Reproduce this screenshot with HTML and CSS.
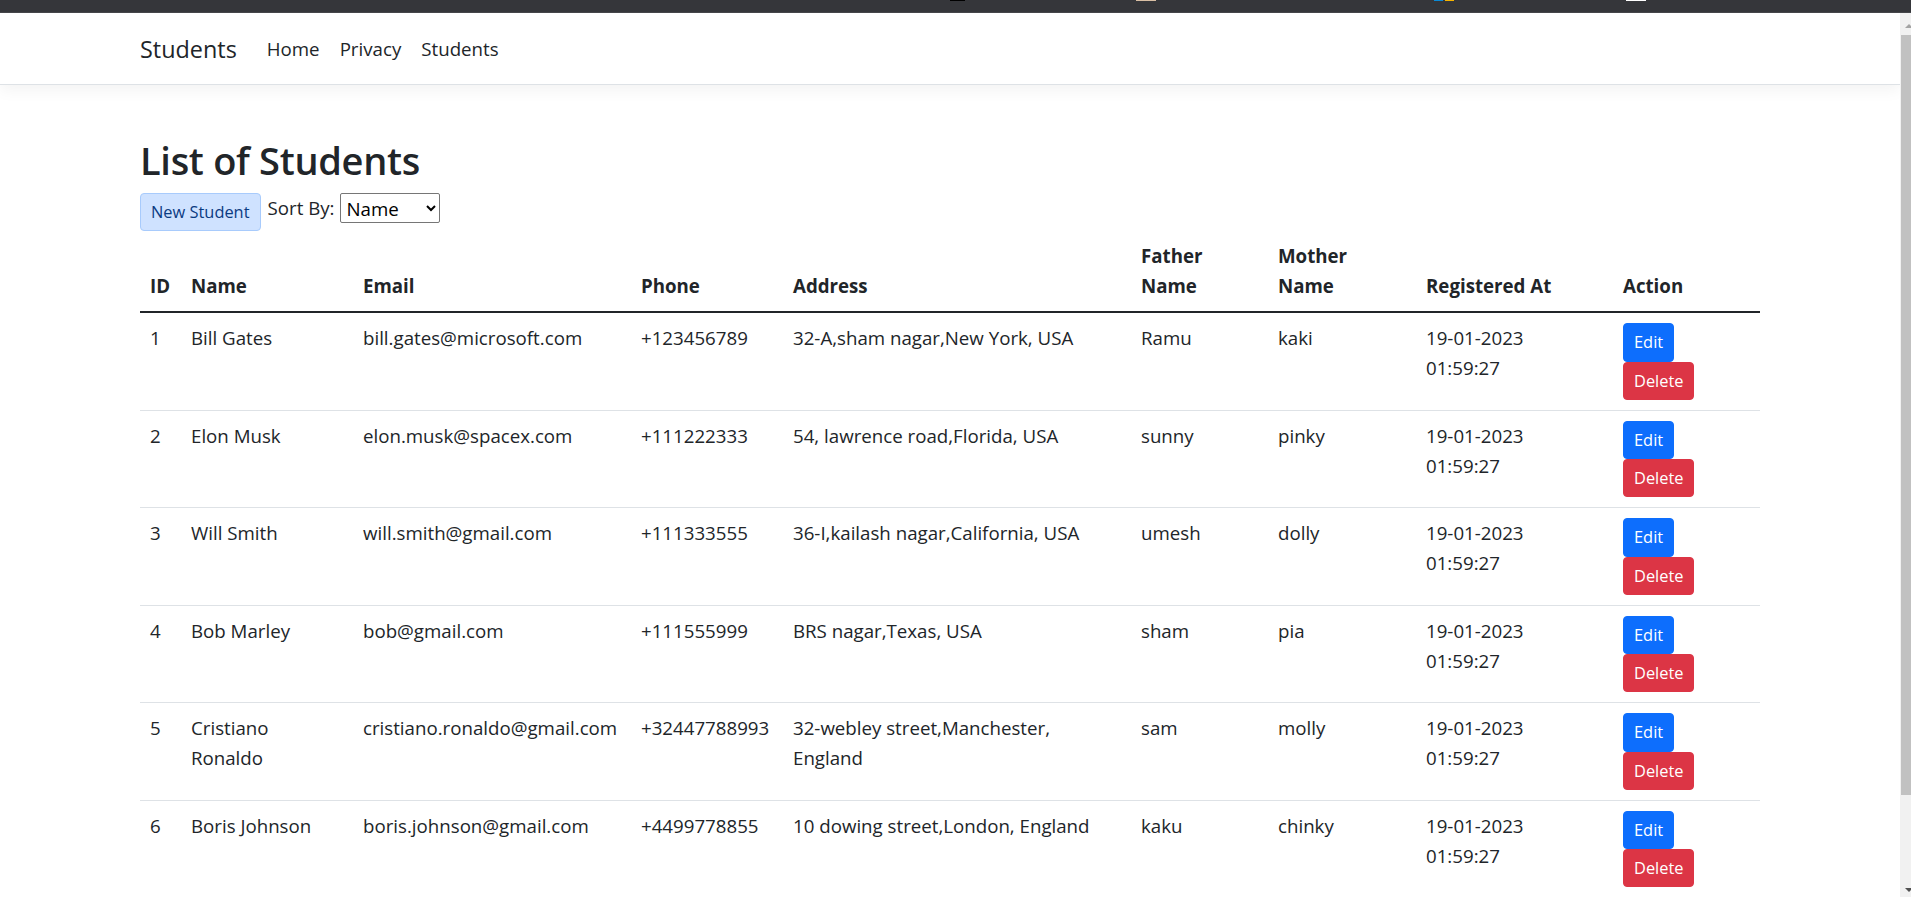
FILE: index.html
```html
<!DOCTYPE html>
<html lang="en">
<head>
<meta charset="utf-8">
<title>Students</title>
<link rel="stylesheet" href="styles.css">
</head>
<body>
<div class="browser-top">
  <span class="tick tick-black"></span>
  <span class="tick tick-beige"></span>
  <span class="tick tick-blue"></span>
  <span class="tick tick-yellow"></span>
  <span class="tick tick-white"></span>
</div>
<div class="viewport">
  <div class="page">
    <header class="navbar">
      <div class="container nav-inner">
        <a class="brand" href="#">Students</a>
        <nav class="nav">
          <a class="nav-link" href="#">Home</a>
          <a class="nav-link" href="#">Privacy</a>
          <a class="nav-link" href="#">Students</a>
        </nav>
      </div>
    </header>
    <main class="container">
      <h1 class="title">List of Students</h1>
      <div class="toolbar">
        <button class="btn btn-sm btn-new">New Student</button>
        <label class="sort-label" for="sort">Sort By:</label>
        <select id="sort" class="sort-select">
          <option>Name</option>
          <option>Email</option>
          <option>Date</option>
        </select>
      </div>
      <table class="table">
        <colgroup>
          <col class="c-id"><col class="c-name"><col class="c-email"><col class="c-phone"><col class="c-address"><col class="c-father"><col class="c-mother"><col class="c-reg"><col class="c-action">
        </colgroup>
        <thead>
          <tr>
            <th>ID</th><th>Name</th><th>Email</th><th>Phone</th><th>Address</th><th>Father Name</th><th>Mother Name</th><th>Registered At</th><th>Action</th>
          </tr>
        </thead>
        <tbody>
          <tr>
            <td>1</td><td>Bill Gates</td><td>bill.gates@microsoft.com</td><td>+123456789</td><td>32-A,sham nagar,New York, USA</td><td>Ramu</td><td>kaki</td><td><div class="stamp">19-01-2023 01:59:27</div></td>
            <td><div class="actions"><button class="btn btn-sm btn-edit">Edit</button><button class="btn btn-sm btn-delete">Delete</button></div></td>
          </tr>
          <tr>
            <td>2</td><td>Elon Musk</td><td>elon.musk@spacex.com</td><td>+111222333</td><td>54, lawrence road,Florida, USA</td><td>sunny</td><td>pinky</td><td><div class="stamp">19-01-2023 01:59:27</div></td>
            <td><div class="actions"><button class="btn btn-sm btn-edit">Edit</button><button class="btn btn-sm btn-delete">Delete</button></div></td>
          </tr>
          <tr>
            <td>3</td><td>Will Smith</td><td>will.smith@gmail.com</td><td>+111333555</td><td>36-I,kailash nagar,California, USA</td><td>umesh</td><td>dolly</td><td><div class="stamp">19-01-2023 01:59:27</div></td>
            <td><div class="actions"><button class="btn btn-sm btn-edit">Edit</button><button class="btn btn-sm btn-delete">Delete</button></div></td>
          </tr>
          <tr>
            <td>4</td><td>Bob Marley</td><td>bob@gmail.com</td><td>+111555999</td><td>BRS nagar,Texas, USA</td><td>sham</td><td>pia</td><td><div class="stamp">19-01-2023 01:59:27</div></td>
            <td><div class="actions"><button class="btn btn-sm btn-edit">Edit</button><button class="btn btn-sm btn-delete">Delete</button></div></td>
          </tr>
          <tr>
            <td>5</td><td>Cristiano Ronaldo</td><td>cristiano.ronaldo@gmail.com</td><td>+32447788993</td><td>32-webley street,Manchester, England</td><td>sam</td><td>molly</td><td><div class="stamp">19-01-2023 01:59:27</div></td>
            <td><div class="actions"><button class="btn btn-sm btn-edit">Edit</button><button class="btn btn-sm btn-delete">Delete</button></div></td>
          </tr>
          <tr>
            <td>6</td><td>Boris Johnson</td><td>boris.johnson@gmail.com</td><td>+4499778855</td><td>10 dowing street,London, England</td><td>kaku</td><td>chinky</td><td><div class="stamp">19-01-2023 01:59:27</div></td>
            <td><div class="actions"><button class="btn btn-sm btn-edit">Edit</button><button class="btn btn-sm btn-delete">Delete</button></div></td>
          </tr>
        </tbody>
      </table>
    </main>
  </div>
  <div class="scrollbar">
    <div class="sb-up"><span class="arrow-up"></span></div>
    <div class="sb-thumb"></div>
    <div class="sb-fill"></div>
    <div class="sb-down"><span class="arrow-down"></span></div>
  </div>
</div>
</body>
</html>
```
FILE: styles.css
```css
* { box-sizing: border-box; }

html, body {
  margin: 0;
  height: 100%;
  overflow: hidden;
}

body {
  font-family: "Open Sans", "Noto Sans", sans-serif;
  font-size: 18.7px;
  line-height: 30px;
  color: #212529;
  background: #fff;
}

/* browser frame strip */
.browser-top {
  position: relative;
  height: 13px;
  background: #35363a;
  border-bottom: 1px solid #45464a;
}
.tick { position: absolute; top: 0; height: 1px; }
.tick-black { left: 950px; width: 15px; background: #000; }
.tick-beige { left: 1136px; width: 20px; background: #d9bfa4; }
.tick-blue { left: 1434px; width: 9px; background: #0a8ad6; }
.tick-yellow { left: 1445px; width: 9px; background: #f7b500; }
.tick-white { left: 1626px; width: 20px; background: #fff; }

.viewport {
  display: flex;
  height: 884px;
}
.page {
  flex: 1;
  min-width: 0;
  overflow: hidden;
}

/* scrollbar */
.scrollbar {
  width: 11px;
  overflow: hidden;
  background: #f1f1f1;
  display: flex;
  flex-direction: column;
}
.sb-up, .sb-down {
  width: 17px;
  display: flex;
  justify-content: center;
  flex: none;
}
.sb-up { height: 22px; align-items: center; padding-top: 3px; }
.sb-down { height: 14px; align-items: center; }
.arrow-up {
  border-left: 4px solid transparent;
  border-right: 4px solid transparent;
  border-bottom: 4px solid #a3a3a3;
}
.arrow-down {
  border-left: 4px solid transparent;
  border-right: 4px solid transparent;
  border-top: 4px solid #505050;
}
.sb-thumb {
  flex: none;
  height: 760px;
  margin-left: 1px;
  width: 15px;
  background: #c1c1c1;
}
.sb-fill { flex: 1; }

/* layout */
.container {
  width: 1650px;
  margin: 0 auto;
  padding: 0 15px;
}

.navbar {
  position: relative;
  height: 72px;
  background: #fff;
  border-bottom: 1px solid #dee2e6;
  box-shadow: 0 5px 15px rgba(0, 0, 0, 0.05);
  display: flex;
  align-items: center;
}
.nav-inner {
  display: flex;
  align-items: center;
  padding-top: 1px;
}
.brand {
  font-size: 23.4px;
  line-height: 37px;
  color: #212529;
  text-decoration: none;
  margin-right: 20px;
}
.nav { display: flex; }
.nav-link {
  padding: 10px;
  color: #212529;
  text-decoration: none;
}

.title {
  margin: 52px 0 10px;
  font-size: 38px;
  line-height: 46px;
  font-weight: 600;
  letter-spacing: -0.3px;
}

.toolbar {
  display: flex;
  align-items: flex-start;
}
.btn {
  font-family: inherit;
  border: 1px solid transparent;
  border-radius: 4px;
  cursor: pointer;
  color: #fff;
}
.btn-sm {
  font-size: 16.4px;
  line-height: 26.25px;
  padding: 5px 10px;
}
.btn-new {
  background: #cfe2ff;
  border-color: #a8cbfc;
  color: #0b3b82;
  margin-right: 7px;
}
.sort-label {
  margin-right: 5px;
}
.sort-select {
  width: 100px;
  height: 30px;
  font-family: inherit;
  font-size: 18.7px;
  color: #000;
  border: 1px solid #767676;
  border-radius: 2px;
  background: #fff;
  padding: 0 2px;
}

/* table */
.table {
  width: 1620px;
  table-layout: fixed;
  border-collapse: separate;
  border-spacing: 0;
}
.c-id { width: 41px; }
.c-name { width: 172px; }
.c-email { width: 278px; }
.c-phone { width: 152px; }
.c-address { width: 348px; }
.c-father { width: 137px; }
.c-mother { width: 148px; }
.c-reg { width: 197px; }
.c-action { width: 147px; }

.table th,
.table td {
  padding: 10px;
  text-align: left;
  vertical-align: top;
}
.table th {
  vertical-align: bottom;
  font-weight: 700;
  border-bottom: 2px solid #212529;
}
.table td {
  border-bottom: 1px solid #dee2e6;
}

.stamp {
  max-width: 150px;
}

.actions {
  display: flex;
  flex-direction: column;
  align-items: flex-start;
}
.btn-edit { background: #0d6efd; border-color: #0d6efd; }
.btn-delete { background: #dc3545; border-color: #dc3545; }
```
